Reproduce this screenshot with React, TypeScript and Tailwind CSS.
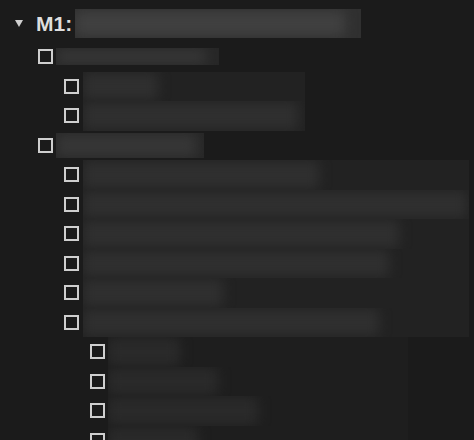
import React from "react";

type Row = {
  level: 1 | 2 | 3;
  box: number;
  bright: number;
  h?: number;
  tone?: "a" | "b" | "c";
};

const rows: Row[] = [
  { level: 1, box: 163, bright: 150, h: 17, tone: "a" },
  { level: 2, box: 222, bright: 75 },
  { level: 2, box: 222, bright: 215 },
  { level: 1, box: 148, bright: 140, h: 25, tone: "a" },
  { level: 2, box: 386, bright: 236 },
  { level: 2, box: 386, bright: 384 },
  { level: 2, box: 386, bright: 316 },
  { level: 2, box: 386, bright: 306 },
  { level: 2, box: 386, bright: 140 },
  { level: 2, box: 386, bright: 296 },
  { level: 3, box: 300, bright: 72, tone: "c" },
  { level: 3, box: 300, bright: 110, tone: "c" },
  { level: 3, box: 300, bright: 150, tone: "c" },
  { level: 3, box: 300, bright: 90, tone: "c" },
];

const indent = { 1: "pl-[38px]", 2: "pl-[64px]", 3: "pl-[90px]" };
const gapCls = { 1: "ml-[3px]", 2: "ml-[4px]", 3: "ml-[3px]" };

const boxBg = { a: "bg-[#272727]", b: "bg-[#222222]", c: "bg-[#1e1e1e]" };
const blobBg = { a: "bg-[#363636]", b: "bg-[#2f2f2f]", c: "bg-[#2a2a2a]" };

function Checkbox() {
  return <div className="size-[15px] shrink-0 border-2 border-[#cfcfcf] bg-[#1b1b1b]" />;
}

function Redacted({ box, bright, h, tone = "b" }: Row) {
  return (
    <div className={`relative overflow-hidden ${boxBg[tone]}`} style={{ width: box, height: h ?? 29.5 }}>
      <div
        className={`absolute inset-y-[1px] left-0 rounded-sm blur-[6px] ${blobBg[tone]}`}
        style={{ width: bright }}
      />
    </div>
  );
}

export default function App() {
  return (
    <div className="h-[440px] w-full overflow-hidden bg-[#1b1b1b] font-['Liberation_Sans',Arial,sans-serif] text-[#dedede]">
      <div className="flex h-[42px] items-center pt-[5px]">
        <svg className="ml-[15px] shrink-0" width="8" height="7" viewBox="0 0 8 7">
          <path d="M0 0 H8 L4 7 Z" fill="#d0d0d0" />
        </svg>
        <span className="ml-[13px] text-[21px] leading-none font-bold">M1:</span>
        <div className="relative ml-[3px] h-[29px] w-[286px] overflow-hidden bg-[#303030]">
          <div className="absolute inset-y-[2px] left-0 w-[270px] rounded-sm bg-[#404040] blur-[6px]" />
        </div>
      </div>
      {rows.map((r, i) => (
        <div key={i} className={`flex h-[29.5px] items-center ${indent[r.level]}`}>
          <Checkbox />
          <div className={gapCls[r.level]}>
            <Redacted {...r} />
          </div>
        </div>
      ))}
    </div>
  );
}
